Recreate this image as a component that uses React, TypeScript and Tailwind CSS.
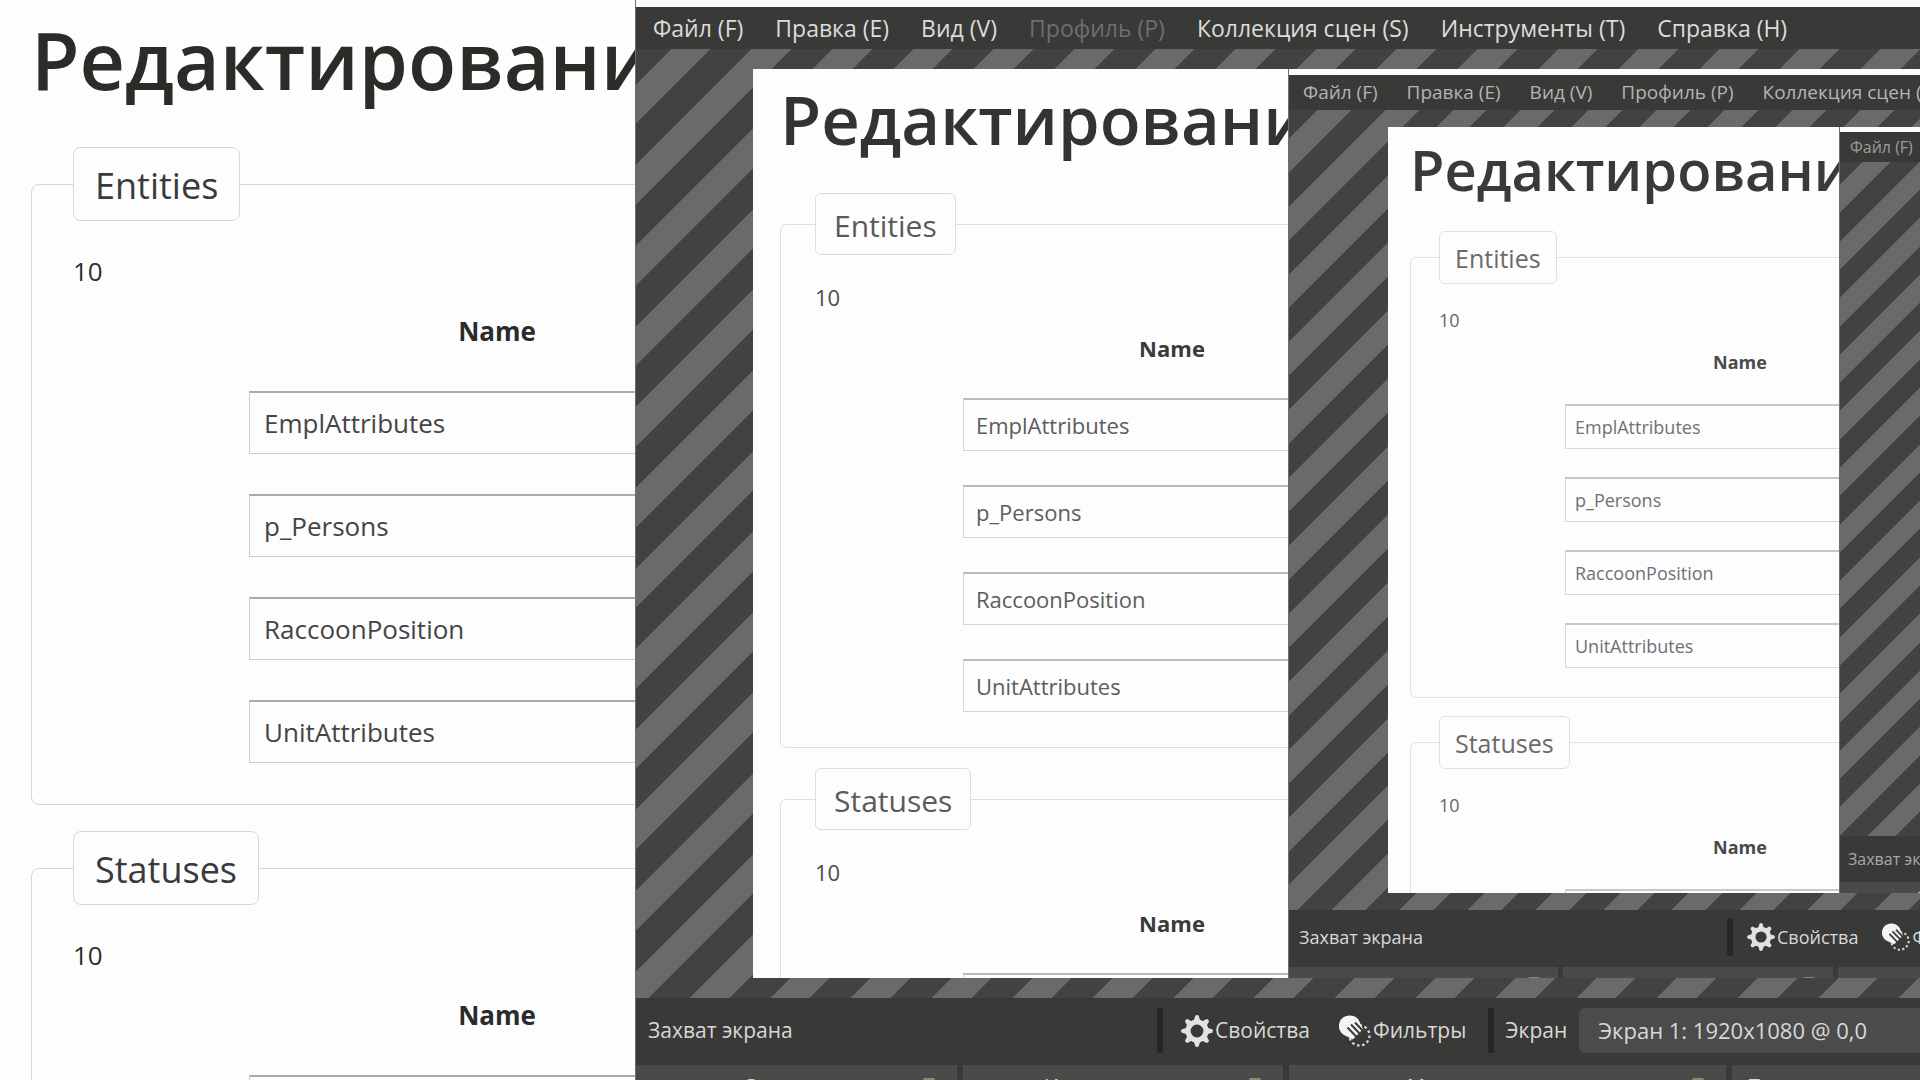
import React from "react";

type Level = 0 | 1 | 2 | 3;

const sections = ["Entities", "Statuses"];
const entities = ["EmplAttributes", "p_Persons", "RaccoonPosition", "UnitAttributes"];

const menuItems = [
  "Файл (F)",
  "Правка (E)",
  "Вид (V)",
  "Профиль (P)",
  "Коллекция сцен (S)",
  "Инструменты (T)",
  "Справка (H)"
];

// Sizes of the edited page, one entry per nesting level of the capture
const pageSizes = [
  {
    page: "w-[635px] pl-[31px]",
    body: "w-[1100px]",
    title: "text-[79px] leading-[120px] mb-[27px] text-[#2b2b28]",
    fieldset: "pl-[41px] pb-[21px] mb-[26px] rounded-lg border-[#d6d6dc]",
    legend: "h-[74px] pt-1 px-[21px] text-[36px] rounded-lg border-[#d6d6dc] text-[#3a3a3c]",
    count: "mt-[30px] text-[26px] leading-[40px] text-[#2f2f2f]",
    spacer: "w-[176px]",
    head: "h-[80px] text-[26px] text-[#2b2b2b]",
    cell: "pt-[20px] pb-[20px]",
    input: "w-[496px] h-[63px] px-[14px] text-[26px] border-[#cbcbd4] border-t-[#a9a9b0] text-[#444446]"
  },
  {
    page: "w-[535px] pl-[27px]",
    body: "w-[926px]",
    title: "text-[67px] leading-[101px] mb-[23px] text-[#333331]",
    fieldset: "pl-[34px] pb-[17px] mb-[20px] rounded-md border-[#dcdce4]",
    legend: "h-[62px] pt-[2px] px-[18px] text-[30px] rounded-md border-[#dcdce4] text-[#5a5a5c]",
    count: "mt-[25px] text-[22px] leading-[34px] text-[#4c4c4c]",
    spacer: "w-[148px]",
    head: "h-[68px] text-[22px] text-[#3a3a3a]",
    cell: "pt-[16px] pb-[18px]",
    input: "w-[418px] h-[53px] px-[12px] text-[22px] border-[#d4d4e0] border-t-[#b8b8be] text-[#5c5c5e]"
  },
  {
    page: "w-[451px] pl-[22px]",
    body: "w-[780px]",
    title: "text-[56px] leading-[85px] mb-[19px] text-[#3a3a38]",
    fieldset: "pl-[28px] pb-[14px] mb-[18px] rounded-md border-[#e0e0e4]",
    legend: "h-[53px] pt-[2px] px-[15px] text-[25px] rounded-md border-[#e0e0e4] text-[#6a6a6c]",
    count: "mt-[22px] text-[18px] leading-[28px] text-[#666666]",
    spacer: "w-[126px]",
    head: "h-[57px] text-[18px] text-[#4a4a4a]",
    cell: "pt-[13px] pb-[15px]",
    input: "w-[350px] h-[45px] px-[9px] text-[18px] border-[#d8d8e2] border-t-[#c6c6d0] text-[#707074]"
  }
];

// Sizes of the recorder window; index 0 is unused because the outermost page is plain
const windowSizes = [
  null,
  {
    strip: "h-[7px]",
    menu: "h-[42px] pl-[17px] gap-[32px] text-[23px] text-[#dcdcdc]",
    scene:
      "py-[20px] pl-[117px] bg-[repeating-linear-gradient(135deg,#424242_0px,#424242_25px,#6a6a6b_25px,#6a6a6b_53px,#424242_53px,#424242_57px)]",
    bar: "h-[67px] pl-[12px] pb-[2px] text-[21px]",
    label: "w-[509px]",
    divider: "w-[6px] h-[45px]",
    tools: "ml-[18px] gap-[29px]",
    icon: "size-8",
    docks: "h-[15px] text-[20px] leading-[28px] pt-[7px]",
    dockWidths: ["w-[321px] pl-[107px]", "w-[320px] pl-[81px]", "w-[437px] pl-[118px]", "w-[188px] pl-[15px]"],
    dockGap: "gap-[6px]",
    dockIcon: "size-3 mr-[22px] mt-[6px]"
  },
  {
    strip: "h-[6px]",
    menu: "h-[35px] pl-[14px] gap-[29px] text-[19px] text-[#b4b4b4]",
    scene:
      "py-[17px] pl-[99px] bg-[repeating-linear-gradient(135deg,#424242_0px,#424242_20px,#6a6a6b_20px,#6a6a6b_44px,#424242_44px,#424242_48px)]",
    bar: "h-[57px] pl-[10px] pb-[3px] text-[18px]",
    label: "w-[428px]",
    divider: "w-[6px] h-[38px]",
    tools: "ml-[14px] gap-[24px]",
    icon: "size-7",
    docks: "h-[11px] text-[18px] leading-[24px] pt-[5px]",
    dockWidths: ["w-[269px] pl-[90px]", "w-[270px] pl-[70px]", "w-[368px] pl-[99px]", "w-[158px] pl-[13px]"],
    dockGap: "gap-[5px]",
    dockIcon: "size-3 mr-[18px] mt-[5px]"
  },
  {
    strip: "h-[5px]",
    menu: "h-[30px] pl-[10px] gap-[24px] text-[16px] text-[#9c9c9c]",
    scene:
      "py-[14px] pl-[84px] bg-[repeating-linear-gradient(135deg,#424242_0px,#424242_16px,#6a6a6b_16px,#6a6a6b_36px,#424242_36px,#424242_40px)]",
    bar: "h-[46px] pl-[8px] text-[16px] text-[#a8a8a8]",
    label: "w-[360px]",
    divider: "w-[5px] h-[32px]",
    tools: "ml-[12px] gap-[18px]",
    icon: "size-6",
    docks: "h-[11px] text-[16px] leading-[20px] pt-[5px]",
    dockWidths: ["w-[226px] pl-[76px]", "w-[226px] pl-[59px]", "w-[310px] pl-[83px]", "w-[133px] pl-[11px]"],
    dockGap: "gap-1",
    dockIcon: "size-3 mr-[15px] mt-[5px]"
  }
];

const docks = ["Сцены", "Источники", "Микшер аудио", "Переходы между сценами"];

const GearIcon = ({ className }: { className: string }) => (
  <svg viewBox="0 0 32 32" className={className} aria-hidden="true">
    <circle cx="16" cy="16" r="9" fill="none" stroke="#e2e2e2" strokeWidth="5.2" />
    {[0, 45, 90, 135, 180, 225, 270, 315].map((angle) => (
      <path key={angle} d="M12.8 6 L14.2 0.8 Q16 -0.6 17.8 0.8 L19.2 6 Z" fill="#e2e2e2" transform={`rotate(${angle} 16 16)`} />
    ))}
  </svg>
);

const FilterIcon = ({ className }: { className: string }) => (
  <svg viewBox="0 0 32 32" className={className} aria-hidden="true">
    <circle cx="20.5" cy="20.5" r="10" fill="none" stroke="#d4d4d4" strokeWidth="2.4" strokeDasharray="2.6 2.6" />
    <path d="M11 0.5 A10.5 10.5 0 0 1 21.5 9 L24 14 L14 24.5 L5 20 A10.5 10.5 0 0 1 11 0.5 Z" fill="#f4f4f4" />
    <path d="M8.5 12.5 L19.5 24 M12 9.5 L23 21 M16 7.5 L25.5 17.5" stroke="#3b3b3a" strokeWidth="2" fill="none" />
    <path d="M13.5 26.5 L26.5 14" stroke="#3b3b3a" strokeWidth="2.4" fill="none" />
  </svg>
);

const EditorPage = ({ level }: { level: 0 | 1 | 2 }) => {
  const s = pageSizes[level];

  return (
    <main className={`shrink-0 overflow-hidden bg-[#fdfdfd] font-['Open_Sans','Noto_Sans',sans-serif] ${s.page}`}>
      <div className={s.body}>
        <h1 className={`font-semibold whitespace-nowrap ${s.title}`}>Редактировани</h1>
        {sections.map((section) => (
          <fieldset key={section} className={`border ${s.fieldset}`}>
            <legend className={`flex items-center border ${s.legend}`}>{section}</legend>
            <p className={s.count}>10</p>
            <table className="border-collapse">
              <thead>
                <tr>
                  <td className={s.spacer} />
                  <th scope="col" className={`p-0 font-bold ${s.head}`}>Name</th>
                </tr>
              </thead>
              <tbody>
                {entities.map((name) => (
                  <tr key={name}>
                    <td />
                    <td className={s.cell}>
                      <input
                        type="text"
                        aria-label={`${section} name`}
                        defaultValue={name}
                        className={`block border border-t-2 bg-transparent outline-none ${s.input}`}
                      />
                    </td>
                  </tr>
                ))}
              </tbody>
            </table>
          </fieldset>
        ))}
      </div>
    </main>
  );
};

const RecorderWindow = ({ level }: { level: Level }) => {
  const s = windowSizes[level];
  if (!s) return null;

  return (
    <section className="flex min-w-0 flex-1 flex-col overflow-hidden border-l border-[#6c6c78] bg-[#393938] font-['Open_Sans','Noto_Sans',sans-serif] whitespace-nowrap text-[#d8d8d8]">
      <div className={`shrink-0 bg-[#fdfdfd] ${s.strip}`} />
      <nav className={`flex shrink-0 items-center overflow-hidden ${s.menu}`}>
        {menuItems.map((item) => (
          <button
            key={item}
            disabled={level === 1 && item.startsWith("Профиль")}
            className="shrink-0 disabled:text-[#6e6e70]"
          >
            {item}
          </button>
        ))}
      </nav>

      <div className={`flex min-h-0 flex-1 ${s.scene}`}>
        {level < 3 && <EditorPage level={level as 1 | 2} />}
        {level < 3 && <RecorderWindow level={(level + 1) as Level} />}
      </div>

      <div className={`flex shrink-0 items-center overflow-hidden ${s.bar}`}>
        <span className={`shrink-0 ${s.label}`}>Захват экрана</span>
        <span className={`shrink-0 rounded-xs bg-[#262629] ${s.divider}`} />
        <div className={`flex shrink-0 items-center ${s.tools}`}>
          <button className="flex items-center gap-[2px]">
            <GearIcon className={s.icon} />
            Свойства
          </button>
          <button className="flex items-center gap-[2px]">
            <FilterIcon className={s.icon} />
            Фильтры
          </button>
        </div>
        {level === 1 && (
          <>
            <span className={`ml-[22px] shrink-0 rounded-xs bg-[#262629] ${s.divider}`} />
            <label htmlFor="screen" className="ml-[11px] shrink-0">Экран</label>
            <select
              id="screen"
              className="ml-[12px] h-[45px] min-w-0 flex-1 appearance-none rounded-l-md bg-[#4b4b4b] pl-[19px] text-[22px] outline-none"
            >
              <option>Экран 1: 1920x1080 @ 0,0</option>
            </select>
          </>
        )}
      </div>

      <div className={`flex shrink-0 overflow-hidden ${s.dockGap} ${level === 1 ? "h-[15px]" : "h-[11px]"}`}>
        {docks.map((dock, i) => (
          <div key={dock} className={`flex shrink-0 justify-between overflow-hidden bg-[#4a4a49] ${s.docks} ${s.dockWidths[i]}`}>
            <span>{dock}</span>
            <span className={`shrink-0 rounded-xs border-2 border-[#8b8b74] ${s.dockIcon}`} />
          </div>
        ))}
      </div>
    </section>
  );
};

export default function App() {
  return (
    <div className="flex h-screen overflow-hidden bg-[#fdfdfd]">
      <EditorPage level={0} />
      <RecorderWindow level={1} />
    </div>
  );
}
